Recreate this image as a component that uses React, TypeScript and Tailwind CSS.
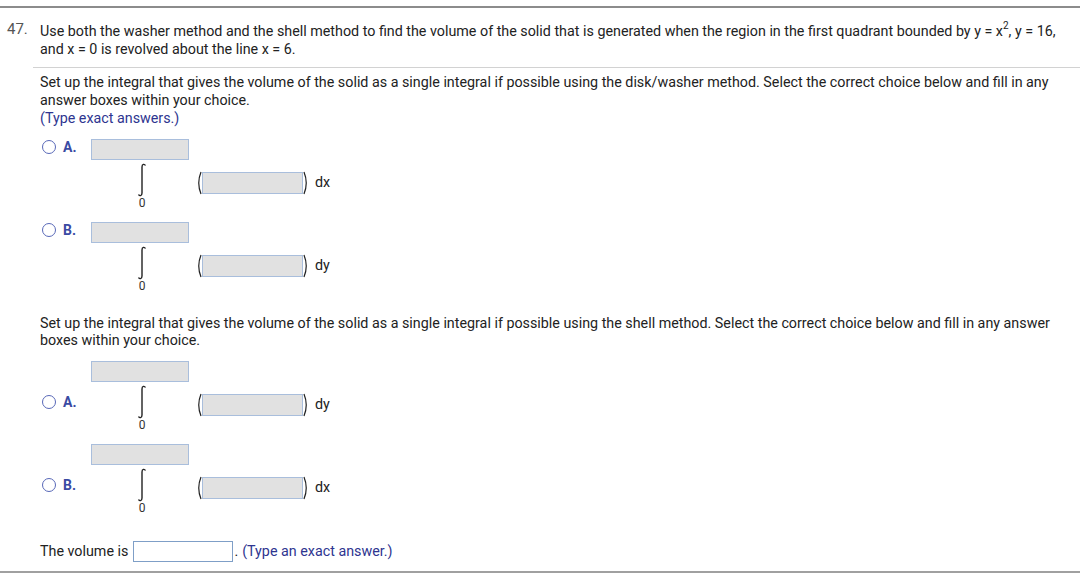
import React from "react";

// component: 적분 기호 //
const IntegralSign = () => (
    <svg width="10" height="34" viewBox="0 0 10 34" className="mt-[3px]">
        <path d="M8.5 2.5 C7.5 0.8 5 0.8 5 4 L5 30 C5 33.2 2.5 33.2 1.5 31.5" fill="none" stroke="#222" strokeWidth="1.4" />
    </svg>
);

// component: 괄호로 감싼 입력칸 //
const ParenBox = () => (
    <div className="flex items-center h-[22px]">
        <svg width="6" height="24" viewBox="0 0 6 24">
            <path d="M5 1 Q0.5 12 5 23" fill="none" stroke="#222" strokeWidth="1.2" />
        </svg>
        <div className="w-[101px] h-[22px] bg-[#e1e1e1] border border-[#a9bedc]" />
        <svg width="6" height="24" viewBox="0 0 6 24">
            <path d="M1 1 Q5.5 12 1 23" fill="none" stroke="#222" strokeWidth="1.2" />
        </svg>
    </div>
);

// component: 선택지 한 줄 //
const Choice = ({ label, d, labelTop }: { label: string; d: string; labelTop: string }) => (
    <div className="flex items-start">
        <div className={`w-[51px] flex items-center h-[18px] ${labelTop}`}>
            <div className="ml-[2px] w-[14px] h-[14px] rounded-full border-[1.5px] border-[#5868b8]" />
            <span className="ml-[7px] font-bold text-[#3a4aa3] text-[14px]">{label}</span>
        </div>
        <div className="w-[98px] flex flex-col items-center">
            <div className="w-[98px] h-[21px] bg-[#e1e1e1] border border-[#a9bedc]" />
            <div className="ml-[4px] flex flex-col items-center">
                <IntegralSign />
                <div className="text-[12px] leading-[12px] text-[#333]">0</div>
            </div>
        </div>
        <div className="ml-[7px] mt-[33px] flex items-center">
            <ParenBox />
            <span className="ml-[6px] text-[#222]">{d}</span>
        </div>
    </div>
);

// render: 문제 화면 //
export default function App() {
    return (
        <div className="w-[1080px] h-[575px] bg-white overflow-hidden text-[14.3px] text-[#222] font-['Roboto','Liberation_Sans',sans-serif]">
            <div className="pt-[6px]">
                <div className="border-t-2 border-[#8c8c8c]" />
            </div>

            <div className="flex mt-[14px]">
                <div className="w-[40px] pl-[7px] text-[15px] text-[#555] -mt-[4px]">47.</div>
                <div className="leading-[18px]">
                    Use both the washer method and the shell method to find the volume of the solid that is generated when the region in the first quadrant bounded by y = x
                    <sup className="text-[10px] -top-[7px]">2</sup>, y = 16,
                    <br />
                    and x = 0 is revolved about the line x = 6.
                </div>
            </div>

            <div className="ml-[33px] mt-[9px] border-t border-[#d2d2d2]" />

            <div className="pl-[40px] pt-[5px]">
                <div className="leading-[18px] pr-[20px]">
                    Set up the integral that gives the volume of the solid as a single integral if possible using the disk/washer method. Select the correct choice below and fill in any answer boxes within your choice.
                </div>
                <div className="leading-[18px] text-[#2e3590]">(Type exact answers.)</div>

                <div className="mt-[12px]">
                    <Choice label="A." d="dx" labelTop="mt-[-1px]" />
                </div>
                <div className="mt-[13px]">
                    <Choice label="B." d="dy" labelTop="mt-[-1px]" />
                </div>

                <div className="mt-[23px] leading-[17px] pr-[20px]">
                    Set up the integral that gives the volume of the solid as a single integral if possible using the shell method. Select the correct choice below and fill in any answer boxes within your choice.
                </div>

                <div className="mt-[12px]">
                    <Choice label="A." d="dy" labelTop="mt-[32px]" />
                </div>
                <div className="mt-[13px]">
                    <Choice label="B." d="dx" labelTop="mt-[32px]" />
                </div>

                <div className="mt-[27px] flex items-center h-[21px]">
                    <span>The volume is</span>
                    <div className="ml-[5px] w-[100px] h-[21px] border border-[#7f9fc7] bg-white" />
                    <span className="ml-[1px]">.</span>
                    <span className="ml-[4px] text-[#2e3590]">(Type an exact answer.)</span>
                </div>
            </div>

            <div className="mt-[9px] border-t-2 border-[#a0a0a0]" />
        </div>
    );
}
